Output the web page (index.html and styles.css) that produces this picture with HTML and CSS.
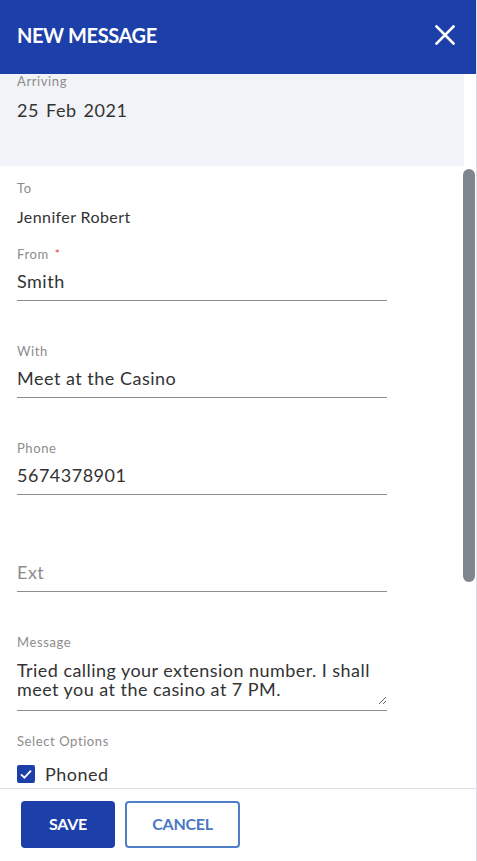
FILE: index.html
```html
<!DOCTYPE html>
<html>
<head>
<meta charset="utf-8">
<link rel="stylesheet" href="styles.css">
</head>
<body>
<div class="panel">
  <header class="header">
    <h1 class="title">NEW MESSAGE</h1>
    <svg class="close" width="20" height="20" viewBox="0 0 20 20"><path d="M1.5 1.5 L18.5 18.5 M18.5 1.5 L1.5 18.5" stroke="#fff" stroke-width="2.6" stroke-linecap="square" fill="none"/></svg>
  </header>
  <div class="scroll">
    <div class="content">
      <section class="arrival">
        <div class="arr-label">Arriving</div>
        <div class="arr-value">25 Feb 2021</div>
      </section>
      <div class="static">
        <div class="label">To</div>
        <div class="static-value">Jennifer Robert</div>
      </div>
      <div class="field">
        <div class="label">From <span class="req">*</span></div>
        <div class="input">Smith</div>
      </div>
      <div class="field">
        <div class="label">With</div>
        <div class="input">Meet at the Casino</div>
      </div>
      <div class="field">
        <div class="label">Phone</div>
        <div class="input">5674378901</div>
      </div>
      <div class="field">
        <div class="label"></div>
        <div class="input placeholder">Ext</div>
      </div>
      <div class="field">
        <div class="label">Message</div>
        <div class="ta-wrap"><textarea class="ta">Tried calling your extension number. I shall meet you at the casino at 7 PM.</textarea></div>
      </div>
      <div class="options">
        <div class="label">Select Options</div>
        <label class="check">
          <span class="box"><svg width="18" height="18" viewBox="0 0 18 18"><path d="M4 9.3 L7.4 12.6 L14 5.6" stroke="#fff" stroke-width="1.8" fill="none"/></svg></span>
          <span class="check-text">Phoned</span>
        </label>
      </div>
    </div>
    <div class="scrollbar"></div>
  </div>
  <footer class="footer">
    <button class="btn btn-primary">SAVE</button>
    <button class="btn btn-outline">CANCEL</button>
  </footer>
</div>
</body>
</html>
```
FILE: styles.css
```css
html, body {
  margin: 0;
  padding: 0;
  background: #fff;
}
body {
  font-family: Lato, "Open Sans", sans-serif;
  color: #333;
}
.panel {
  width: 476px;
  height: 861px;
  border-right: 1px solid #dcdde2;
  display: flex;
  flex-direction: column;
  overflow: hidden;
}
.header {
  height: 74px;
  flex: none;
  background: #1d3faa;
  display: flex;
  align-items: center;
  justify-content: space-between;
  padding: 0 21px 0 17px;
}
.title {
  margin: 0;
  font-size: 20px;
  font-weight: 700;
  color: #fff;
  letter-spacing: -0.4px;
  padding-bottom: 4px;
}
.close {
  display: block;
  margin-bottom: 4px;
}
.scroll {
  height: 714px;
  flex: none;
  position: relative;
  overflow: hidden;
}
.content {
  margin-right: 12px;
}
.arrival {
  background: #f2f3f8;
  height: 92px;
  padding: 0 17px;
}
.arr-label {
  font-size: 13px;
  line-height: 14px;
  color: #8c8c8c;
  letter-spacing: 0.6px;
}
.arr-value {
  margin-top: 10px;
  font-size: 18px;
  line-height: 24px;
  color: #333;
  word-spacing: 2px;
  letter-spacing: 0.5px;
}
.static {
  padding: 14px 17px 0;
}
.label {
  font-size: 13px;
  line-height: 16px;
  height: 16px;
  color: #8c8c8c;
  letter-spacing: 0.6px;
}
.req {
  color: #e53935;
  font-size: 12px;
  vertical-align: top;
  margin-left: 2px;
}
.static-value {
  margin-top: 9px;
  font-size: 16px;
  line-height: 24px;
  color: #333;
  letter-spacing: 0.4px;
}
.field {
  padding: 17px 17px 0;
  width: 370px;
}
.field + .field {
  padding-top: 42px;
}
.input {
  font-size: 18px;
  line-height: 24px;
  padding: 7px 0 7px;
  border-bottom: 1px solid #8f8f8f;
  color: #333;
  letter-spacing: 0.5px;
}
.placeholder {
  color: #8c8c8c;
}
.ta-wrap {
  border-bottom: 1px solid #8f8f8f;
  padding-bottom: 5px;
}
.ta {
  display: block;
  width: 370px;
  height: 55px;
  box-sizing: border-box;
  margin: 0;
  padding: 11px 0 6px;
  border: none;
  outline: none;
  background: transparent;
  font-family: Lato, "Open Sans", sans-serif;
  font-size: 18px;
  line-height: 19px;
  letter-spacing: 0.45px;
  color: #333;
  resize: vertical;
  overflow: hidden;
}
.options {
  padding: 22px 17px 0;
}
.check {
  display: flex;
  align-items: center;
  margin-top: 13px;
  gap: 10px;
}
.box {
  width: 18px;
  height: 18px;
  border-radius: 2px;
  background: #1d3faa;
  display: block;
}
.box svg {
  display: block;
}
.check-text {
  font-size: 18px;
  line-height: 24px;
  color: #333;
  letter-spacing: 0.5px;
}
.scrollbar {
  position: absolute;
  top: 95px;
  right: 1px;
  width: 12px;
  height: 413px;
  border-radius: 6px;
  background: #80868f;
}
.footer {
  flex: 1;
  border-top: 1px solid #dcdde2;
  padding: 12px 21px 0;
  display: flex;
  gap: 10px;
  align-items: flex-start;
}
.btn {
  height: 47px;
  border-radius: 4px;
  font-family: Lato, "Open Sans", sans-serif;
  font-size: 16px;
  font-weight: 700;
  letter-spacing: -0.3px;
  cursor: pointer;
  margin: 0;
  padding: 0 0 2px;
}
.btn-primary {
  width: 94px;
  background: #1d3faa;
  color: #fff;
  border: none;
}
.btn-outline {
  width: 115px;
  background: #fff;
  color: #4a78c2;
  border: 2px solid #4f7fc6;
}
```
